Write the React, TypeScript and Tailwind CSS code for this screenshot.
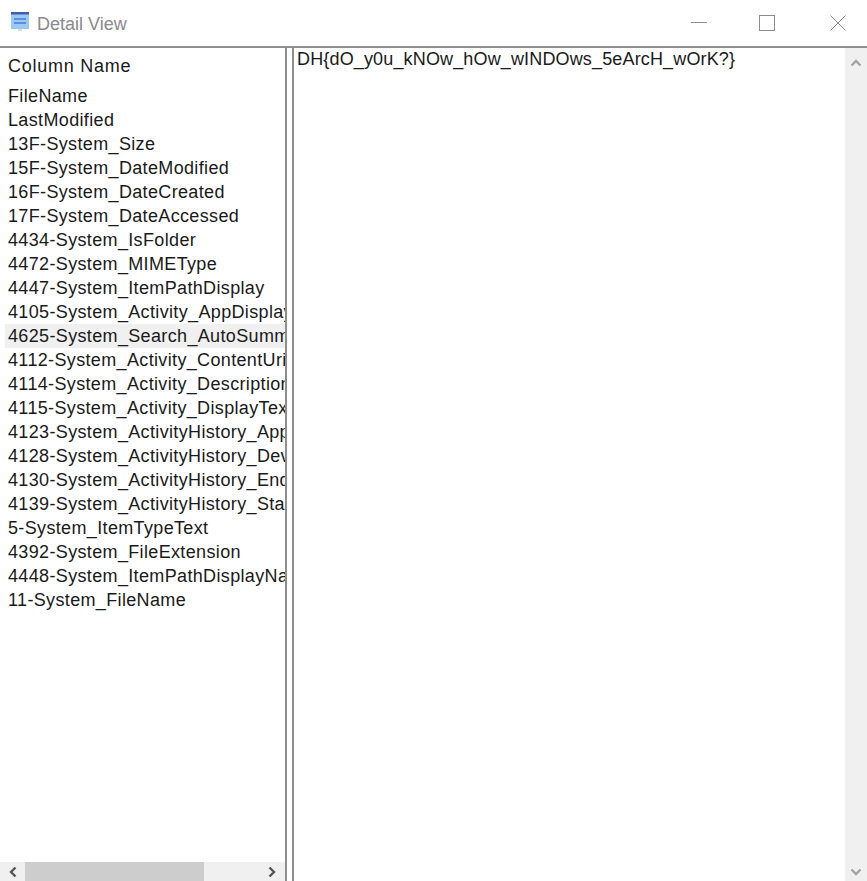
const rows = [
  "FileName",
  "LastModified",
  "13F-System_Size",
  "15F-System_DateModified",
  "16F-System_DateCreated",
  "17F-System_DateAccessed",
  "4434-System_IsFolder",
  "4472-System_MIMEType",
  "4447-System_ItemPathDisplay",
  "4105-System_Activity_AppDisplayName",
  "4625-System_Search_AutoSummary",
  "4112-System_Activity_ContentUri",
  "4114-System_Activity_Description",
  "4115-System_Activity_DisplayText",
  "4123-System_ActivityHistory_AppId",
  "4128-System_ActivityHistory_DeviceId",
  "4130-System_ActivityHistory_EndTime",
  "4139-System_ActivityHistory_StartTime",
  "5-System_ItemTypeText",
  "4392-System_FileExtension",
  "4448-System_ItemPathDisplayName",
  "11-System_FileName",
];

function Chevron({ d, className }: { d: string; className: string }) {
  return (
    <svg viewBox="0 0 12 12" className={className} fill="none" stroke="currentColor" strokeWidth="2.4">
      <path d={d} />
    </svg>
  );
}

function App() {
  return (
    <div className="flex h-[881px] w-[867px] flex-col overflow-hidden bg-white font-['Liberation_Sans',sans-serif] text-[#1a1a1a]">
      <div className="flex h-[46px] shrink-0 items-start justify-between">
        <div className="flex items-center gap-[7px] pl-[10px] pt-[10px]">
          <svg viewBox="0 0 20 22" className="h-[22px] w-[20px]">
            <rect x="1" y="2" width="18" height="16" fill="#9cc8f4" />
            <rect x="1" y="1" width="18" height="2.5" fill="#3f5fa8" />
            <rect x="4" y="7" width="12" height="2" fill="#5b8fdc" />
            <rect x="4" y="11" width="12" height="2" fill="#5b8fdc" />
            <rect x="8" y="18" width="4" height="2" fill="#cfe2f8" />
          </svg>
          <span className="pt-[4px] text-[18px] leading-[20px] text-[#8a8a8a]">Detail View</span>
        </div>
        <div className="flex items-center pt-[15px] text-[#8c8c8c]">
          <svg viewBox="0 0 16 16" className="mr-[52px] h-[16px] w-[16px]" fill="none" stroke="currentColor">
            <path d="M0 7.5H16" />
          </svg>
          <svg viewBox="0 0 16 16" className="mr-[55px] h-[16px] w-[16px]" fill="none" stroke="currentColor">
            <rect x="0.5" y="0.5" width="15" height="15" />
          </svg>
          <svg viewBox="0 0 16 16" className="mr-[21px] h-[16px] w-[16px]" fill="none" stroke="currentColor">
            <path d="M0.5 0.5L15.5 15.5M15.5 0.5L0.5 15.5" />
          </svg>
        </div>
      </div>

      <div className="flex min-h-0 flex-1 border-t-2 border-[#8f8f8f]">
        <div className="flex w-[287px] shrink-0 flex-col border-r-2 border-[#8f8f8f]">
          <div className="min-h-0 flex-1 overflow-hidden">
            <div className="pl-[8px] pt-[6px] text-[18px] leading-[24px] tracking-[0.75px]">Column Name</div>
            <ul className="mt-[6px] pl-[5px] text-[18px] leading-[24px] tracking-[0.35px]">
              {rows.map((row) => (
                <li
                  key={row}
                  className={`overflow-hidden whitespace-nowrap pl-[3px] ${row.startsWith("4625") ? "bg-[#f0f0f0]" : ""}`}
                >
                  {row}
                </li>
              ))}
            </ul>
          </div>
          <div className="flex h-[19px] shrink-0 items-center bg-[#f0f0f0] text-[#555555]">
            <div className="flex w-[25px] justify-center">
              <Chevron d="M8.5 1.5L4 6L8.5 10.5" className="h-[12px] w-[12px]" />
            </div>
            <div className="h-full w-[179px] bg-[#cdcdcd]" />
            <div className="flex flex-1 justify-end pr-[7px]">
              <Chevron d="M3.5 1.5L8 6L3.5 10.5" className="h-[12px] w-[12px]" />
            </div>
          </div>
        </div>

        <div className="ml-[5px] flex min-w-0 flex-1 border-l-2 border-[#8f8f8f]">
          <div className="min-w-0 flex-1 pl-[3px] text-[18px] leading-[22px] tracking-[0.15px]">
            DH{"{"}dO_y0u_kNOw_hOw_wINDOws_5eArcH_wOrK?{"}"}
          </div>
          <div className="flex w-[22px] shrink-0 flex-col items-center justify-between bg-[#f0f0f0] pb-[3px] pt-[9px] text-[#a3a3a3]">
            <Chevron d="M1.5 8.5L6 4L10.5 8.5" className="h-[12px] w-[12px]" />
            <Chevron d="M1.5 3.5L6 8L10.5 3.5" className="h-[12px] w-[12px]" />
          </div>
        </div>
      </div>
    </div>
  );
}

export default App;
